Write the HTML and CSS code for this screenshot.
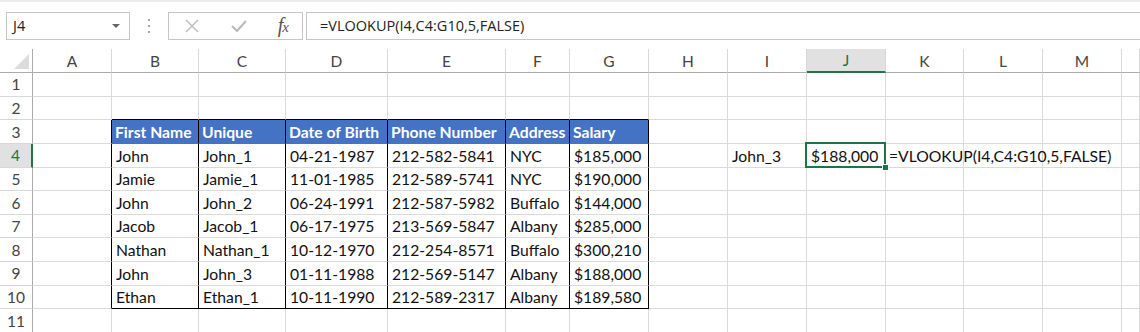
FILE: index.html
```html
<!DOCTYPE html>
<html lang="en">
<head>
    <meta charset="UTF-8">
    <title>VLOOKUP</title>
    <link rel="stylesheet" href="styles.css">
</head>
<body>
    <div class="toolbar">
        <div class="namebox">
            <span>J4</span>
            <span class="caret"></span>
        </div>
        <div class="grip">
            <svg width="4" height="14" viewBox="0 0 4 14"><rect x="1" y="0" width="2" height="2"/><rect x="1" y="6" width="2" height="2"/><rect x="1" y="12" width="2" height="2"/></svg>
        </div>
        <div class="fxbtns">
            <svg class="btn" width="16" height="16" viewBox="0 0 16 16"><path d="M2 2 L14 14 M14 2 L2 14" stroke="#b9b9b9" stroke-width="1.4" fill="none"/></svg>
            <svg class="btn" width="18" height="16" viewBox="0 0 18 16"><path d="M2 8 L7 13 L16 3" stroke="#b9b9b9" stroke-width="2" fill="none"/></svg>
            <span class="fx">f<i>x</i></span>
        </div>
        <div class="formula">=VLOOKUP(I4,C4:G10,5,FALSE)</div>
    </div>

    <div class="sheet">
        <div class="row head">
            <div class="corner"><span></span></div>
            <div class="col">A</div><div class="col">B</div><div class="col">C</div><div class="col">D</div>
            <div class="col">E</div><div class="col">F</div><div class="col">G</div><div class="col">H</div>
            <div class="col">I</div><div class="col sel">J</div><div class="col">K</div><div class="col">L</div>
            <div class="col">M</div><div class="col"></div>
        </div>
        <div class="row">
            <div class="rn">1</div>
            <div class="c"></div><div class="c"></div><div class="c"></div><div class="c"></div><div class="c"></div><div class="c"></div><div class="c"></div>
            <div class="c"></div><div class="c"></div><div class="c"></div><div class="c"></div><div class="c"></div><div class="c"></div><div class="c"></div>
        </div>
        <div class="row">
            <div class="rn">2</div>
            <div class="c"></div><div class="c bt"></div><div class="c bt"></div><div class="c bt"></div><div class="c bt"></div><div class="c bt"></div><div class="c bt"></div>
            <div class="c"></div><div class="c"></div><div class="c"></div><div class="c"></div><div class="c"></div><div class="c"></div><div class="c"></div>
        </div>
        <div class="row">
            <div class="rn">3</div>
            <div class="c bl"></div>
            <div class="c t th">First Name</div><div class="c t th">Unique</div><div class="c t th">Date of Birth</div>
            <div class="c t th">Phone Number</div><div class="c t th">Address</div><div class="c t th">Salary</div>
            <div class="c"></div><div class="c"></div><div class="c"></div><div class="c"></div><div class="c"></div><div class="c"></div><div class="c"></div>
        </div>
        <div class="row">
            <div class="rn sel">4</div>
            <div class="c bl"></div>
            <div class="c t">John</div><div class="c t">John_1</div><div class="c t">04-21-1987</div>
            <div class="c t">212-582-5841</div><div class="c t">NYC</div><div class="c t">$185,000</div>
            <div class="c"></div>
            <div class="c">John_3</div>
            <div class="c active">$188,000<span class="handle"></span></div>
            <div class="c over">=VLOOKUP(I4,C4:G10,5,FALSE)</div>
            <div class="c"></div><div class="c"></div><div class="c"></div>
        </div>
        <div class="row">
            <div class="rn">5</div>
            <div class="c bl"></div>
            <div class="c t">Jamie</div><div class="c t">Jamie_1</div><div class="c t">11-01-1985</div>
            <div class="c t">212-589-5741</div><div class="c t">NYC</div><div class="c t">$190,000</div>
            <div class="c"></div><div class="c"></div><div class="c"></div><div class="c"></div><div class="c"></div><div class="c"></div><div class="c"></div>
        </div>
        <div class="row">
            <div class="rn">6</div>
            <div class="c bl"></div>
            <div class="c t">John</div><div class="c t">John_2</div><div class="c t">06-24-1991</div>
            <div class="c t">212-587-5982</div><div class="c t">Buffalo</div><div class="c t">$144,000</div>
            <div class="c"></div><div class="c"></div><div class="c"></div><div class="c"></div><div class="c"></div><div class="c"></div><div class="c"></div>
        </div>
        <div class="row">
            <div class="rn">7</div>
            <div class="c bl"></div>
            <div class="c t">Jacob</div><div class="c t">Jacob_1</div><div class="c t">06-17-1975</div>
            <div class="c t">213-569-5847</div><div class="c t">Albany</div><div class="c t">$285,000</div>
            <div class="c"></div><div class="c"></div><div class="c"></div><div class="c"></div><div class="c"></div><div class="c"></div><div class="c"></div>
        </div>
        <div class="row">
            <div class="rn">8</div>
            <div class="c bl"></div>
            <div class="c t">Nathan</div><div class="c t">Nathan_1</div><div class="c t">10-12-1970</div>
            <div class="c t">212-254-8571</div><div class="c t">Buffalo</div><div class="c t">$300,210</div>
            <div class="c"></div><div class="c"></div><div class="c"></div><div class="c"></div><div class="c"></div><div class="c"></div><div class="c"></div>
        </div>
        <div class="row">
            <div class="rn">9</div>
            <div class="c bl"></div>
            <div class="c t">John</div><div class="c t">John_3</div><div class="c t">01-11-1988</div>
            <div class="c t">212-569-5147</div><div class="c t">Albany</div><div class="c t">$188,000</div>
            <div class="c"></div><div class="c"></div><div class="c"></div><div class="c"></div><div class="c"></div><div class="c"></div><div class="c"></div>
        </div>
        <div class="row">
            <div class="rn">10</div>
            <div class="c bl"></div>
            <div class="c t bb">Ethan</div><div class="c t bb">Ethan_1</div><div class="c t bb">10-11-1990</div>
            <div class="c t bb">212-589-2317</div><div class="c t bb">Albany</div><div class="c t bb">$189,580</div>
            <div class="c"></div><div class="c"></div><div class="c"></div><div class="c"></div><div class="c"></div><div class="c"></div><div class="c"></div>
        </div>
        <div class="row">
            <div class="rn">11</div>
            <div class="c"></div><div class="c"></div><div class="c"></div><div class="c"></div><div class="c"></div><div class="c"></div><div class="c"></div>
            <div class="c"></div><div class="c"></div><div class="c"></div><div class="c"></div><div class="c"></div><div class="c"></div><div class="c"></div>
        </div>
    </div>
</body>
</html>
```

FILE: styles.css
```css
body {
    margin: 0;
    background: #fff;
    font-family: Lato, "Liberation Sans", sans-serif;
    overflow: hidden;
}

/* formula bar */
.toolbar {
    height: 49px;
    display: flex;
    align-items: center;
    padding: 0 0 0 6px;
    box-sizing: border-box;
    border-top: 2px solid #ececec;
    font-family: "Open Sans", "Noto Sans", sans-serif;
    font-size: 14.5px;
    color: #222;
}
.namebox {
    width: 124px;
    height: 28px;
    box-sizing: border-box;
    border: 1px solid #c6c6c6;
    display: flex;
    align-items: center;
    justify-content: space-between;
    padding: 0 9px 0 6px;
}
.caret {
    width: 0;
    height: 0;
    border-left: 4px solid transparent;
    border-right: 4px solid transparent;
    border-top: 4px solid #666;
}
.grip {
    width: 38px;
    display: flex;
    justify-content: center;
    fill: #a6a6a6;
}
.fxbtns {
    width: 135px;
    height: 28px;
    box-sizing: border-box;
    border: 1px solid #c6c6c6;
    display: flex;
    align-items: center;
    padding: 0 14px 0 15px;
    justify-content: space-between;
}
.fx {
    font-family: "Liberation Serif", serif;
    font-style: italic;
    font-size: 20px;
    color: #555;
    letter-spacing: -1px;
}
.fx i {
    font-size: 15px;
}
.formula {
    flex: 1;
    height: 28px;
    box-sizing: border-box;
    border: 1px solid #c6c6c6;
    border-right: none;
    margin-left: 3px;
    padding-left: 13px;
    line-height: 26px;
}

/* grid */
.row {
    display: grid;
    grid-template-columns: 33px 79px 87px 87px 102px 118px 64px 79px 79px 79px 79px 78px 79px 79px 18px;
    height: 23.65px;
}
.row.head {
    height: 24px;
}
.c, .col, .rn, .corner {
    box-sizing: border-box;
    border-right: 1px solid #dadada;
    border-bottom: 1px solid #dadada;
    font-size: 15.7px;
    color: #111;
    white-space: nowrap;
    display: flex;
    align-items: flex-end;
    padding: 0 0 2px 4px;
    position: relative;
}
.col, .rn {
    justify-content: center;
    align-items: center;
    padding: 0;
    color: #444;
    font-size: 15.5px;
}
.col {
    border-bottom-color: #ababab;
    border-right-color: #d8d8d8;
}
.rn {
    border-right-color: #ababab;
    border-bottom-color: #d8d8d8;
}
.corner {
    border-right-color: #ababab;
    border-bottom-color: #ababab;
}
.corner span {
    position: absolute;
    right: 3px;
    bottom: 3px;
    width: 0;
    height: 0;
    border-left: 15px solid transparent;
    border-bottom: 15px solid #dcdcdc;
}
.col.sel {
    background: #e1e1e1;
    border-bottom: 2px solid #217346;
    color: #217346;
}
.rn.sel {
    background: #e1e1e1;
    border-right: 2px solid #217346;
    color: #217346;
}

/* table borders */
.bt { border-bottom-color: #000; }
.bl { border-right-color: #000; }
.t { border-right-color: #000; }
.bb { border-bottom-color: #000; }
.th {
    background: #4472c4;
    color: #fff;
    font-weight: bold;
    font-size: 15.7px;
    border-bottom-color: #4472c4;
    padding-left: 3px;
}

/* selected cell */
.active::after {
    content: "";
    position: absolute;
    left: -2px;
    top: -2px;
    right: -1px;
    bottom: -1px;
    border: 2px solid #217346;
}
.handle {
    position: absolute;
    right: -4px;
    bottom: -4px;
    width: 5px;
    height: 5px;
    background: #217346;
    border: 1px solid #fff;
    z-index: 2;
}
.over {
    overflow: visible;
    padding-left: 3px;
    z-index: 1;
}
```
